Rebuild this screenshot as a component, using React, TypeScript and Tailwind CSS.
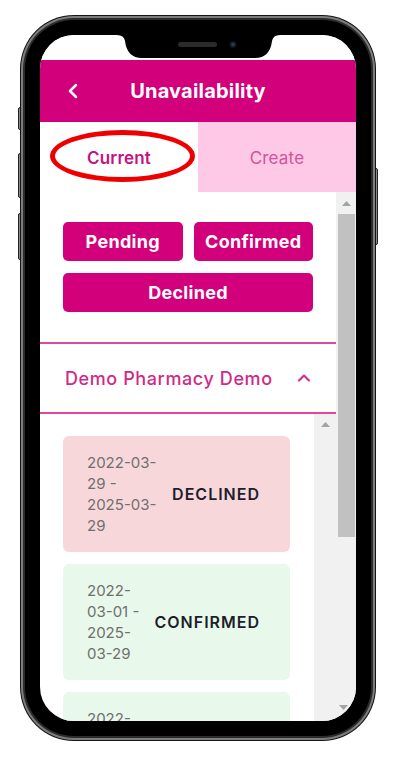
import { ChevronLeft, ChevronUp } from "lucide-react";

const font = { fontFamily: "Inter, 'Open Sans', sans-serif" };

function Notch() {
  return (
    <svg width="163" height="24" viewBox="0 0 163 24" className="absolute left-[77px] top-0">
      <path
        d="M0 0 H163 Q156 0 155 6 Q153 23 138 23 H25 Q10 23 8 6 Q7 0 0 0 Z"
        fill="#000"
      />
      <rect x="61" y="7" width="39" height="5" rx="2.5" fill="#2b2b2b" />
      <circle cx="116" cy="9.5" r="3.3" fill="#1a1a2a" />
      <circle cx="116" cy="9.5" r="1.4" fill="#27406b" />
    </svg>
  );
}

function ScrollArrow({ up }: { up?: boolean }) {
  return (
    <svg width="9" height="5" viewBox="0 0 9 5">
      <path d={up ? "M0 5 L4.5 0 L9 5 Z" : "M0 0 L4.5 5 L9 0 Z"} fill="#a3a3a3" />
    </svg>
  );
}

function StatusButton({ label, wide }: { label: string; wide?: boolean }) {
  return (
    <button
      className={`flex h-[39px] items-center justify-center rounded-[5px] bg-[#d3007b] text-[18px] font-bold tracking-[0.3px] text-white ${
        wide ? "col-span-2" : ""
      }`}
    >
      {label}
    </button>
  );
}

type Booking = { dates: string; status: string; tone: "red" | "green" };

const bookings: Booking[] = [
  { dates: "2022-03-29 - 2025-03-29", status: "DECLINED", tone: "red" },
  { dates: "2022-03-01 - 2025-03-29", status: "CONFIRMED", tone: "green" },
  { dates: "2022-03-01 - 2025-03-29", status: "CONFIRMED", tone: "green" },
];

function BookingCard({ booking }: { booking: Booking }) {
  return (
    <div
      className={`flex shrink-0 items-center gap-3 rounded-[6px] py-[16px] pl-6 pr-[30px] ${
        booking.tone === "red" ? "bg-[#f8d7da]" : "bg-[#e8f8ea]"
      }`}
    >
      <span className="min-w-0 flex-1 text-[15px] leading-[21px] text-[#6f6f6f]">{booking.dates}</span>
      <span className="shrink-0 text-[16px] font-semibold tracking-[1px] text-[#1e1e2a]">{booking.status}</span>
    </div>
  );
}

function Screen() {
  return (
    <div className="relative flex h-full flex-col overflow-hidden rounded-[34px] bg-white" style={font}>
      <div className="relative h-[25px] shrink-0 bg-white">
        <Notch />
      </div>

      <header className="relative flex h-[62px] shrink-0 items-center justify-center bg-[#d3007b]">
        <ChevronLeft className="absolute left-[21px] text-white" size={24} strokeWidth={2.5} />
        <h1 className="text-[20px] font-bold tracking-[0.2px] text-white">Unavailability</h1>
      </header>

      <div className="relative grid h-[70px] shrink-0 grid-cols-2">
        <div className="flex items-center justify-center pt-[3px] bg-white text-[17px] font-semibold tracking-[0.2px] text-[#c8127f]">Current</div>
        <div className="flex items-center justify-center pt-[3px] bg-[#fdc9e6] text-[17px] tracking-[0.2px] text-[#d4529c]">Create</div>
        <div className="absolute left-[10px] top-[8px] h-[52px] w-[145px] rounded-[50%] border-[5px] border-[#ee0000]" />
      </div>

      <div className="flex min-h-0 flex-1">
        <div className="flex min-w-0 flex-1 flex-col">
          <div className="grid shrink-0 grid-cols-2 gap-x-[11px] gap-y-[12px] px-[23px] py-[30px]">
            <StatusButton label="Pending" />
            <StatusButton label="Confirmed" />
            <StatusButton label="Declined" wide />
          </div>

          <div className="flex h-[72px] shrink-0 items-center justify-between border-y-2 border-[#e2469f] pl-[25px] pr-[22px]">
            <span className="text-[18px] font-medium tracking-[0.6px] text-[#d02a86]">Demo Pharmacy Demo</span>
            <ChevronUp className="text-[#d02a86]" size={20} strokeWidth={2.5} />
          </div>

          <div className="flex min-h-0 flex-1">
            <div className="flex min-w-0 flex-1 flex-col gap-3 overflow-hidden pl-[23px] pr-[24px] pt-[22px]">
              {bookings.map((b, i) => (
                <BookingCard key={i} booking={b} />
              ))}
            </div>
            <div className="flex w-[22px] shrink-0 justify-center bg-[#f1f1f1] pt-[8px]">
              <ScrollArrow up />
            </div>
          </div>
        </div>

        <div className="flex w-[20px] shrink-0 flex-col items-center bg-[#f1f1f1]">
          <div className="flex h-[22px] items-center justify-center">
            <ScrollArrow up />
          </div>
          <div className="h-[323px] w-[17px] bg-[#c1c1c1]" />
          <div className="flex-1" />
          <div className="mb-[11px] -translate-x-[3px]">
            <ScrollArrow />
          </div>
        </div>
      </div>
    </div>
  );
}

export default function App() {
  return (
    <div className="min-h-[758px] w-[398px] bg-white pl-[20px] pt-[15px]">
      <div className="relative h-[726px] w-[356px]">
        <div className="absolute -left-[2px] top-[92px] h-[23px] w-[4px] rounded-l-[2px] border border-[#222] bg-[#8a8a8a]" />
        <div className="absolute -left-[2px] top-[138px] h-[45px] w-[4px] rounded-l-[2px] border border-[#222] bg-[#8a8a8a]" />
        <div className="absolute -left-[2px] top-[198px] h-[47px] w-[4px] rounded-l-[2px] border border-[#222] bg-[#8a8a8a]" />
        <div className="absolute -right-[2px] top-[153px] h-[77px] w-[4px] rounded-r-[2px] border border-[#222] bg-[#8a8a8a]" />
        <div className="relative h-full w-full rounded-[54px] bg-[#151515] p-[1px]">
          <div className="h-full w-full rounded-[53px] bg-[#7d7d7d] p-[2px]">
            <div className="h-full w-full rounded-[51px] bg-[#2c2c2c] p-[2px]">
              <div className="h-full w-full rounded-[49px] bg-black p-[15px]">
                <Screen />
              </div>
            </div>
          </div>
        </div>
      </div>
    </div>
  );
}
